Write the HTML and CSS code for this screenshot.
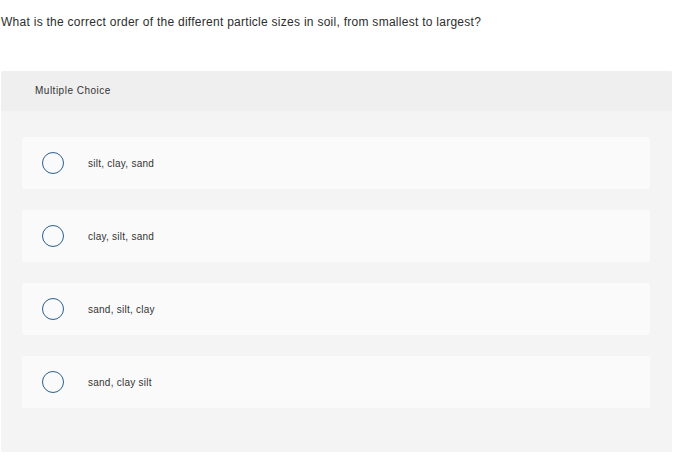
FILE: index.html
```html
<!DOCTYPE html>
<html>
<head>
<meta charset="utf-8">
<link rel="stylesheet" href="styles.css">
</head>
<body>
<div class="page">
  <p class="question">What is the correct order of the different particle sizes in soil, from smallest to largest?</p>
  <div class="panel">
    <div class="panel-head">Multiple Choice</div>
    <div class="panel-body">
      <label class="option"><span class="radio"></span><span class="opt-text">silt, clay, sand</span></label>
      <label class="option"><span class="radio"></span><span class="opt-text">clay, silt, sand</span></label>
      <label class="option"><span class="radio"></span><span class="opt-text">sand, silt, clay</span></label>
      <label class="option"><span class="radio"></span><span class="opt-text">sand, clay silt</span></label>
    </div>
  </div>
</div>
</body>
</html>
```
FILE: styles.css
```css
html, body {
  margin: 0;
  padding: 0;
  background: #ffffff;
}
body {
  font-family: "Liberation Sans", Arial, sans-serif;
  color: #2d2d2d;
}
.page {
  width: 671px;
  padding: 0 0 0 1px;
}
.question {
  margin: 0;
  padding-top: 14px;
  font-size: 12px;
  letter-spacing: 0.27px;
  line-height: 16px;
  height: 57px;
}
.panel {
  background: #f4f4f4;
  border-radius: 2px;
  width: 671px;
  height: 381px;
  overflow: hidden;
}
.panel-head {
  background: #efefef;
  height: 40px;
  box-sizing: border-box;
  padding-bottom: 2px;
  display: flex;
  align-items: center;
  padding-left: 34px;
  font-size: 10px;
  letter-spacing: 0.5px;
  color: #333;
}
.panel-body {
  padding: 26px 22px 0 21px;
  display: flex;
  flex-direction: column;
  gap: 21px;
}
.option {
  background: #fafafa;
  border-radius: 2px;
  height: 52px;
  display: flex;
  align-items: center;
  padding-left: 20px;
}
.radio {
  width: 20px;
  height: 20px;
  border: 1.5px solid #2a5f8f;
  border-radius: 50%;
  flex: none;
}
.opt-text {
  margin-left: 24px;
  font-size: 10px;
  letter-spacing: 0.25px;
  color: #333;
}
```
